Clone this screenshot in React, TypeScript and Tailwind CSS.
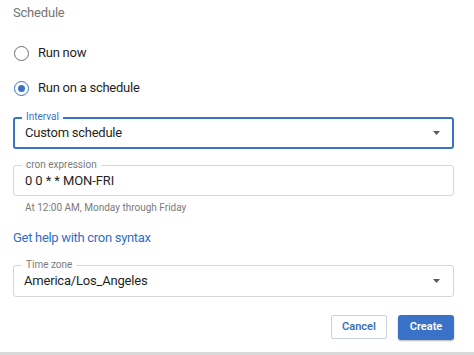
import React from 'react'

const Radio = ({ checked, label }: { checked?: boolean; label: string }) => (
    <div className="flex items-center h-[20px]">
        <span
            className={`w-[15px] h-[15px] rounded-full border-[1.5px] flex items-center justify-center ${checked ? 'border-[#3a72c8]' : 'border-[#6e6e6e]'}`}>
            {checked && <span className="w-[7px] h-[7px] rounded-full bg-[#3a72c8]" />}
        </span>
        <span className="ml-[9px] text-[13px] tracking-[-0.25px] text-[#1f1f1f]">{label}</span>
    </div>
)

const Caret = () => (
    <svg width="7" height="4" viewBox="0 0 7 4" className="mr-[2px]">
        <path d="M0 0 L7 0 L3.5 4 Z" fill="#5a5a5a" />
    </svg>
)

const App = () => {
    return (
        <div className="w-[474px] h-[355px] bg-white flex flex-col font-['Roboto','Liberation_Sans',sans-serif] overflow-hidden">
            <div className="flex-1 px-[13px] pr-[20px]">
                {/* TITLE */}
                <div className="pt-[5px] text-[13px] leading-[16px] tracking-[-0.2px] text-[#747474]">Schedule</div>

                {/* RADIOS */}
                <div className="mt-[22px] flex flex-col gap-[15px] pl-[1px]">
                    <Radio label="Run now" />
                    <Radio checked label="Run on a schedule" />
                </div>

                {/* INTERVAL */}
                <div className="relative mt-[19px] h-[32px] border-2 border-[#3a72c8] rounded-[3px] flex items-center justify-between pl-[10px] pr-[10px]">
                    <span className="absolute -top-[8px] left-[7px] px-[4px] bg-white text-[10px] leading-[12px] text-[#3a72c8]">Interval</span>
                    <span className="text-[13px] tracking-[-0.25px] text-[#1f1f1f]">Custom schedule</span>
                    <Caret />
                </div>

                {/* CRON */}
                <div className="relative mt-[16px] h-[31px] border border-[#d6d6d6] rounded-[3px] flex items-center pl-[11px]">
                    <span className="absolute -top-[7px] left-[8px] px-[4px] bg-white text-[10px] leading-[12px] text-[#7a7a7a]">cron expression</span>
                    <span className="text-[13px] tracking-[-0.1px] text-[#1f1f1f]">0 0 * * MON-FRI</span>
                </div>
                <div className="mt-[6px] pl-[12px] text-[10px] leading-[12px] text-[#7a7a7a]">At 12:00 AM, Monday through Friday</div>

                <div className="mt-[16px] text-[13px] leading-[16px] tracking-[-0.3px] text-[#2f6ec8]">Get help with cron syntax</div>

                {/* TIME ZONE */}
                <div className="relative mt-[19px] h-[32px] border border-[#d6d6d6] rounded-[3px] flex items-center justify-between pl-[10px] pr-[11px]">
                    <span className="absolute -top-[7px] left-[8px] px-[4px] bg-white text-[10px] leading-[12px] text-[#7a7a7a]">Time zone</span>
                    <span className="text-[13px] tracking-[-0.2px] text-[#1f1f1f]">America/Los_Angeles</span>
                    <Caret />
                </div>

                {/* ACTIONS */}
                <div className="mt-[18px] flex justify-end gap-[11px]">
                    <button className="w-[56px] h-[24px] border border-[#c9d3e0] rounded-[2px] bg-white text-[11px] font-semibold text-[#3a6fb8]">
                        Cancel
                    </button>
                    <button className="w-[56px] h-[25px] rounded-[3px] bg-[#3a72c8] text-[11px] font-semibold text-white shadow-[0_1px_2px_rgba(0,0,0,0.3)]">
                        Create
                    </button>
                </div>
            </div>
            <div className="h-[3px] bg-[#d9d9d9]" />
        </div>
    )
}

export default App
